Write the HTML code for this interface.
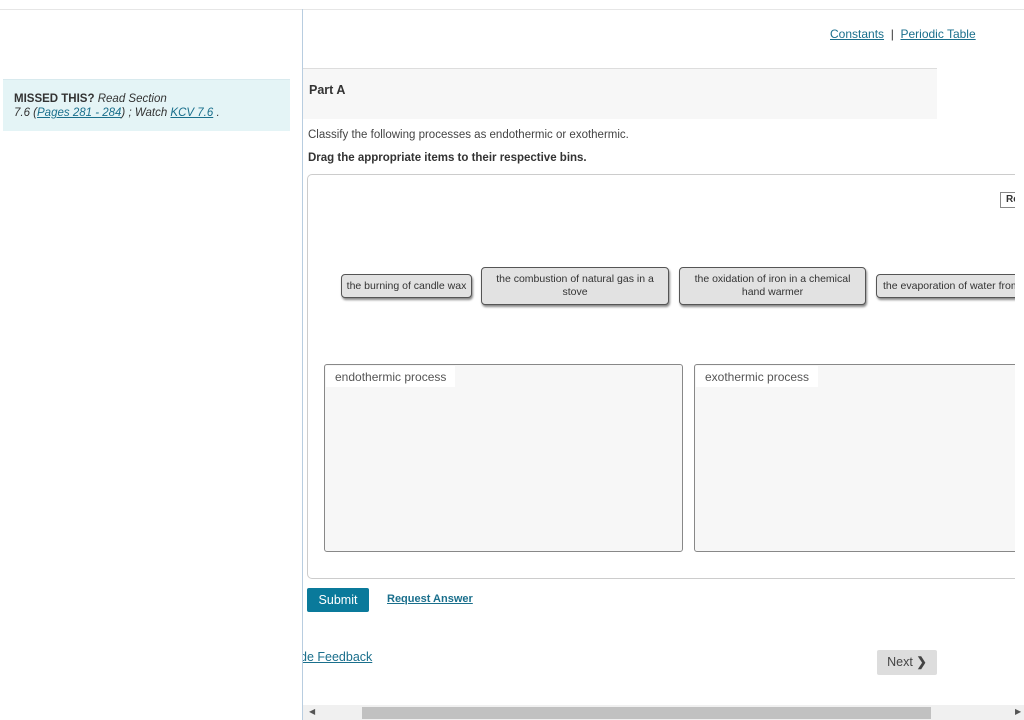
<!DOCTYPE html>
<html><head><style>
body{margin:0;width:1024px;height:720px;overflow:hidden;background:#fff;font-family:"Liberation Sans",Arial,sans-serif;position:relative;color:#333}
.a{position:absolute}
a{color:#1a6f8c;text-decoration:underline}
.item{position:absolute;background:#e2e2e2;border:1px solid #555;border-radius:4px;box-shadow:1px 2px 2px #888;font-size:10.5px;text-align:center;color:#333;display:flex;align-items:center;justify-content:center;line-height:13px;box-sizing:border-box;white-space:nowrap;overflow:hidden}
.bin{position:absolute;background:#f7f7f7;border:1px solid #888;border-radius:3px;box-sizing:border-box}
.bin span{position:absolute;left:1px;top:1px;background:#fff;padding:4px 9px 3px 9px;font-size:12px;color:#555}
</style></head><body>
<div class="a" style="left:0;top:9px;width:1024px;height:1px;background:#e6e6e6"></div>
<div class="a" style="left:302px;top:9px;width:1px;height:711px;background:#b8cde0"></div>
<div class="a" style="left:3px;top:79px;width:287px;height:51px;background:#e4f4f6;border-top:1px solid #d8eaee"></div>
<div class="a" style="left:14px;top:92px;font-size:11.5px;line-height:14px;color:#333"><b>MISSED THIS?</b> <i>Read Section<br>7.6 (<a>Pages 281 - 284</a>) ; Watch <a>KCV 7.6</a> .</i></div>
<div class="a" style="left:830px;top:27px;font-size:12px"><a>Constants</a> &nbsp;|&nbsp; <a>Periodic Table</a></div>
<div class="a" style="left:303px;top:68px;width:634px;height:50px;background:#f7f7f7;border-top:1px solid #ddd"></div>
<div class="a" style="left:309px;top:83px;font-size:12.5px;font-weight:bold">Part A</div>
<div class="a" style="left:308px;top:129px;font-size:11.5px;color:#444">Classify the following processes as endothermic or exothermic.</div>
<div class="a" style="left:308px;top:152px;font-size:11.5px;font-weight:bold">Drag the appropriate items to their respective bins.</div>
<div class="a" style="left:307px;top:174px;width:730px;height:403px;border:1px solid #ccc;border-radius:5px"></div>
<div class="a" style="left:1000px;top:192px;width:30px;height:16px;border:1px solid #888;font-size:10px;font-weight:bold;padding-left:5px;box-sizing:border-box;line-height:14px">Re</div>
<div class="item" style="left:341px;top:274px;width:131px;height:24px">the burning of candle wax</div>
<div class="item" style="left:481px;top:267px;width:188px;height:38px">the combustion of natural gas in a<br>stove</div>
<div class="item" style="left:679px;top:267px;width:187px;height:38px">the oxidation of iron in a chemical<br>hand warmer</div>
<div class="item" style="left:876px;top:274px;width:160px;height:24px;justify-content:flex-start;padding-left:6px">the evaporation of water from</div>
<div class="bin" style="left:324px;top:364px;width:359px;height:188px"><span>endothermic process</span></div>
<div class="bin" style="left:694px;top:364px;width:340px;height:188px"><span>exothermic process</span></div>
<div class="a" style="left:1015px;top:10px;width:9px;height:695px;background:#fff"></div>
<div class="a" style="left:307px;top:588px;width:62px;height:24px;background:#0a7a9b;border-radius:2px;color:#fff;font-size:12.5px;text-align:center;line-height:24px">Submit</div>
<div class="a" style="left:387px;top:593px;font-size:11px;font-weight:bold"><a>Request Answer</a></div>
<div class="a" style="left:303px;top:650px;width:80px;overflow:hidden;font-size:12.5px"><a style="margin-left:-3px">de Feedback</a></div>
<div class="a" style="left:877px;top:650px;width:60px;height:25px;background:#ddd;border-radius:2px;font-size:12.5px;line-height:25px;text-align:center;color:#444">Next <b>&#x276F;</b></div>
<div class="a" style="left:303px;top:705px;width:721px;height:15px;background:#f0f0f0"></div>
<div class="a" style="left:362px;top:707px;width:569px;height:12px;background:#c1c1c1"></div>
<div class="a" style="left:309px;top:707px;font-size:8px;color:#555">&#9664;</div>
<div class="a" style="left:1015px;top:707px;font-size:8px;color:#555">&#9654;</div>
</body></html>
